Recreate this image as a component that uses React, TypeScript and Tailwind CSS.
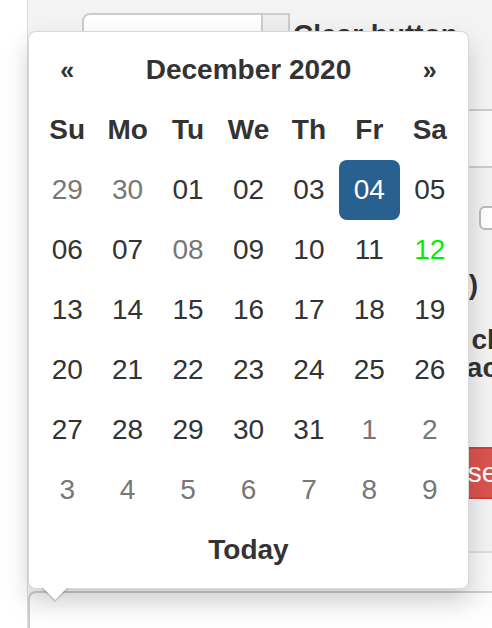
import React from "react";

type Day = { label: string; tone?: "old" | "new" | "active" | "highlight" };

const weekDays = ["Su", "Mo", "Tu", "We", "Th", "Fr", "Sa"];

const weeks: Day[][] = [
  [
    { label: "29", tone: "old" },
    { label: "30", tone: "old" },
    { label: "01" },
    { label: "02" },
    { label: "03" },
    { label: "04", tone: "active" },
    { label: "05" },
  ],
  [
    { label: "06" },
    { label: "07" },
    { label: "08", tone: "old" },
    { label: "09" },
    { label: "10" },
    { label: "11" },
    { label: "12", tone: "highlight" },
  ],
  ["13", "14", "15", "16", "17", "18", "19"].map((label) => ({ label })),
  ["20", "21", "22", "23", "24", "25", "26"].map((label) => ({ label })),
  [
    { label: "27" },
    { label: "28" },
    { label: "29" },
    { label: "30" },
    { label: "31" },
    { label: "1", tone: "new" },
    { label: "2", tone: "new" },
  ],
  ["3", "4", "5", "6", "7", "8", "9"].map((label) => ({ label, tone: "new" as const })),
];

function dayClass(tone?: Day["tone"]) {
  if (tone === "old" || tone === "new") return "text-[#777]";
  if (tone === "active") return "rounded-[8px] bg-[#28608f] text-white";
  if (tone === "highlight") return "text-[#00ee00]";
  return "text-[#333]";
}

function DatePicker() {
  return (
    <div className="absolute left-[28px] top-[31px] w-[441px] rounded-[8px] border border-black/15 bg-white p-[8px] shadow-[0_12px_24px_rgba(0,0,0,0.175)]">
      <div className="grid grid-cols-7 text-center text-[28px] leading-[60px] text-[#333]">
        <div className="text-[25px] font-bold">«</div>
        <div className="col-span-5 font-bold">December 2020</div>
        <div className="text-[25px] font-bold">»</div>

        {weekDays.map((d) => (
          <div key={d} className="font-bold">
            {d}
          </div>
        ))}

        {weeks.map((week, i) =>
          week.map((day, j) => (
            <div key={`${i}-${j}`} className={dayClass(day.tone)}>
              {day.label}
            </div>
          ))
        )}

        <div className="col-span-7 font-bold">Today</div>
      </div>

      {/* arrow pointing down to the input */}
      <div className="absolute bottom-[-14px] left-[12px] h-0 w-0 border-x-[14px] border-t-[14px] border-x-transparent border-t-black/15" />
      <div className="absolute bottom-[-12px] left-[14px] h-0 w-0 border-x-[12px] border-t-[12px] border-x-transparent border-t-white" />
    </div>
  );
}

export default function App() {
  return (
    <div
      className="relative flex h-[628px] w-[492px] overflow-hidden bg-white text-[#333]"
      style={{ fontFamily: '"Liberation Sans", Arial, Helvetica, sans-serif' }}
    >
      <div className="w-[27px] shrink-0 bg-white" />

      <div className="flex min-w-0 flex-1 flex-col border-l border-[#ddd] bg-[#f3f3f3]">
        <div className="flex h-[111px] shrink-0 items-start border-b-2 border-[#ccc] pl-[54px] pt-[13px]">
          <div className="h-[68px] w-[181px] rounded-l-[8px] border-2 border-[#ccc] bg-white" />
          <div className="h-[68px] w-[27px] border-y-2 border-r-2 border-[#ccc] bg-[#eee]" />
          <div className="ml-[3px] whitespace-nowrap pt-[8px] text-[28px] font-bold leading-none text-[#333]">
            Clear button
          </div>
        </div>

        <div className="h-[57px] shrink-0 border-b-2 border-[#ccc] bg-[#f9f9f9]" />

        <div className="flex h-[383px] shrink-0 flex-col bg-gradient-to-r from-[#e6e6e6] to-[#f2f2f2]">
          <div className="ml-[451px] mt-[38px] h-[24px] w-[30px] rounded-[6px] border-2 border-[#bbb] bg-white" />
          <div className="mt-[40px] whitespace-nowrap pr-[14px] text-right text-[28px] font-bold leading-[30px]">
            Start date (2020)
          </div>
          <div className="ml-[372px] mt-[26px] whitespace-nowrap text-[28px] font-bold leading-[28px]">
            Auto close
          </div>
          <div className="ml-[400px] whitespace-nowrap text-[28px] font-bold leading-[28px]">
            Attach
          </div>
          <div className="ml-[330px] mt-[65px] flex h-[52px] w-[200px] items-center whitespace-nowrap rounded-[8px] border-2 border-[#d43f3a] bg-[#d9534f] pl-[72px] text-[28px] text-white">
            Reset
          </div>
        </div>

        <div className="h-[40px] shrink-0 border-t-2 border-[#ddd] bg-[#f7f7f7]" />

        <div className="flex-1 rounded-tl-[8px] border-l-2 border-t-2 border-[#ccc] bg-gradient-to-b from-[#fafafa] to-white" />
      </div>

      <DatePicker />
    </div>
  );
}
